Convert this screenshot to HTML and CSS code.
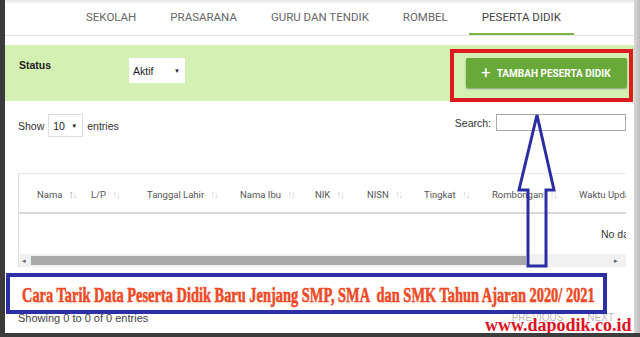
FILE: index.html
```html
<!DOCTYPE html>
<html lang="id">
<head>
    <meta charset="UTF-8">
    <meta name="viewport" content="width=device-width, initial-scale=1.0">
    <title>Peserta Didik</title>
    <link rel="stylesheet" href="styles.css">
</head>
<body>

    <div class="screen">
        <div class="edge-left"></div>

        <div class="page">
            <nav class="tabs">
                <a class="tab">SEKOLAH</a>
                <a class="tab">PRASARANA</a>
                <a class="tab">GURU DAN TENDIK</a>
                <a class="tab">ROMBEL</a>
                <a class="tab active">PESERTA DIDIK</a>
            </nav>

            <div class="filter">
                <span class="filter-label">Status</span>
                <div class="select status-select"><span>Aktif</span><span class="caret">&#9660;</span></div>
                <button class="btn-add"><span class="plus">+</span>TAMBAH PESERTA DIDIK</button>
            </div>

            <div class="controls">
                <div class="length">
                    Show
                    <div class="select len-select"><span>10</span><span class="caret">&#9660;</span></div>
                    entries
                </div>
                <div class="search">
                    <label for="search">Search:</label>
                    <input type="text" id="search">
                </div>
            </div>

            <div class="table-wrap">
                <div class="thead">
                    <div class="th">Nama<span class="sort asc"><b>&#8593;</b>&#8595;</span></div>
                    <div class="th">L/P<span class="sort">&#8593;&#8595;</span></div>
                    <div class="th">Tanggal Lahir<span class="sort">&#8593;&#8595;</span></div>
                    <div class="th">Nama Ibu<span class="sort">&#8593;&#8595;</span></div>
                    <div class="th">NIK<span class="sort">&#8593;&#8595;</span></div>
                    <div class="th">NISN<span class="sort">&#8593;&#8595;</span></div>
                    <div class="th">Tingkat<span class="sort">&#8593;&#8595;</span></div>
                    <div class="th">Rombongan<span class="sort">&#8593;&#8595;</span></div>
                    <div class="th">Waktu Update</div>
                </div>
                <div class="tbody">
                    <span class="empty">No data available in table</span>
                </div>
                <div class="hscroll">
                    <span class="arr">&#9666;</span>
                    <span class="thumb"></span>
                    <span class="arr right">&#9656;</span>
                </div>
            </div>

            <div class="info-row">
                <span class="info">Showing 0 to 0 of 0 entries</span>
                <div class="paginate">
                    <span>PREVIOUS</span>
                    <span>NEXT</span>
                </div>
            </div>
        </div>

        <div class="edge-right"></div>

        <!-- tanda-tanda di atas gambar -->
        <div class="mark-box"></div>

        <svg class="mark-arrow" width="42" height="157" viewBox="0 0 42 157">
            <polygon points="22,3 4,78 13,78 13,154 31,154 31,78 39,78" fill="none" stroke="#2b2ea3" stroke-width="3"/>
        </svg>

        <div class="caption">
            <span class="caption-text">Cara Tarik Data Peserta Didik Baru Jenjang SMP, SMA &nbsp;dan SMK Tahun Ajaran 2020/ 2021</span>
        </div>

        <div class="watermark">www.dapodik.co.id</div>
    </div>

</body>
</html>
```

FILE: styles.css
```css
* {
    margin: 0;
    padding: 0;
    box-sizing: border-box;
}

body {
    font-family: 'Liberation Sans', Arial, sans-serif;
    font-size: 10.5px;
    color: #333;
    background-color: #3a3a3a;
}

.screen {
    width: 640px;
    height: 337px;
    display: flex;
    position: relative;
    overflow: hidden;
    border-bottom: 4px solid #3c3c3c;
    background-color: #fff;
}

.edge-left {
    flex-shrink: 0;
    width: 5px;
    background-color: #3a3a3a;
}

.edge-right {
    flex-shrink: 0;
    width: 6px;
    background: linear-gradient(to right, #d8d8d8, #bdbdbd);
}

.page {
    flex: 1;
    min-width: 0;
    overflow: hidden;
    display: flex;
    flex-direction: column;
    background-color: #fff;
    background-image: linear-gradient(#e6e6e6, #fff 4px);
}

/* tab menu */
.tabs {
    display: flex;
    height: 36px;
    padding-left: 68px;
    gap: 8px;
    border-bottom: 1px solid #e2e2e2;
}

.tab {
    font-family: Roboto, sans-serif;
    font-size: 11.5px;
    color: #666;
    padding: 0 13px;
    line-height: 34px;
    height: 35px;
}

.tab.active {
    color: #444;
    box-shadow: inset 0 -2px 0 #7cb342;
}

/* filter hijau */
.filter {
    display: flex;
    align-items: flex-start;
    height: 56px;
    margin-top: 9px;
    padding: 13px 7px 0 14px;
    background-color: #d4f1b3;
}

.filter-label {
    width: 110px;
    line-height: 14px;
    font-weight: bold;
    color: #222;
}

.select {
    display: flex;
    align-items: center;
    justify-content: space-between;
    background-color: #fff;
    color: #222;
}

.caret {
    font-size: 6px;
    color: #222;
}

.status-select {
    width: 56px;
    height: 25px;
    padding: 0 5px 0 4px;
}

.btn-add {
    margin-left: auto;
    width: 161px;
    height: 30px;
    border: none;
    border-radius: 2px;
    background-color: #68a93a;
    box-shadow: 0 1px 2px rgba(0,0,0,0.35);
    color: #fff;
    font-family: Roboto, sans-serif;
    font-weight: bold;
    font-size: 10px;
    display: flex;
    align-items: center;
    padding-left: 15px;
}

.plus {
    font-size: 17px;
    font-weight: normal;
    margin-right: 6px;
    line-height: 1;
    margin-top: -2px;
}

/* show + search */
.controls {
    display: flex;
    align-items: flex-start;
    justify-content: space-between;
    margin-top: 13px;
    padding: 0 8px 0 13px;
}

.length {
    display: flex;
    align-items: center;
    gap: 4px;
    height: 23px;
}

.len-select {
    width: 35px;
    height: 23px;
    border: 1px solid #ddd;
    padding: 0 5px 0 4px;
}

.search {
    display: flex;
    align-items: center;
    gap: 5px;
}

.search input {
    width: 130px;
    height: 17px;
    border: 1px solid #a9a9a9;
}

/* tabel */
.table-wrap {
    margin: 36px 8px 0 13px;
    border-left: 1px solid #e0e0e0;
    border-top: 1px solid #e6e6e6;
    overflow: hidden;
}

.thead {
    display: grid;
    grid-template-columns: 54px 56px 93px 75px 52px 57px 68px 87px 120px;
    height: 40px;
    padding: 3px 0 0 18px;
    align-items: center;
    border-bottom: 2px solid #d9d9d9;
    white-space: nowrap;
}

.th {
    font-family: Roboto, sans-serif;
    font-size: 9.5px;
    color: #555;
}

.sort {
    margin-left: 6px;
    font-size: 11px;
    color: #d6d6d6;
    letter-spacing: -2px;
}

.sort b {
    font-weight: normal;
    color: #a8a8a8;
}

.tbody {
    height: 40px;
    display: flex;
    align-items: center;
    padding-left: 582px;
    white-space: nowrap;
}

.empty {
    font-size: 10.5px;
    color: #333;
}

.hscroll {
    display: flex;
    align-items: center;
    height: 13px;
    background-color: #f1f1f1;
    padding: 0 3px;
}

.arr {
    font-size: 7px;
    color: #606060;
    width: 9px;
}

.arr.right {
    margin-left: auto;
}

.thumb {
    width: 495px;
    height: 9px;
    background-color: #a8a8a8;
}

/* info bawah */
.info-row {
    display: flex;
    justify-content: space-between;
    margin-top: 44px;
    padding: 0 20px 0 13px;
    line-height: 14px;
}

.info {
    font-size: 11px;
    color: #444;
}

.paginate {
    display: flex;
    gap: 24px;
    font-size: 10px;
    color: #bbb;
}

/* tanda merah, panah biru, judul */
.mark-box {
    position: absolute;
    left: 450px;
    top: 49px;
    width: 183px;
    height: 53px;
    border: 4px solid #dc1a1f;
}

.mark-arrow {
    position: absolute;
    left: 515px;
    top: 112px;
}

.caption {
    position: absolute;
    left: 6px;
    top: 273px;
    width: 601px;
    height: 41px;
    border: 4px solid #2c2fa6;
    background-color: #fff;
    overflow: hidden;
}

.caption-text {
    display: block;
    width: 880px;
    margin-left: 12px;
    padding-top: 3px;
    transform: scaleX(0.655);
    transform-origin: left top;
    font-family: 'Liberation Serif', 'Times New Roman', serif;
    font-weight: bold;
    font-size: 22px;
    line-height: 30px;
    color: #ef4a25;
    -webkit-text-stroke: 0.6px #ef4a25;
    white-space: nowrap;
}

.watermark {
    position: absolute;
    left: 485px;
    top: 315px;
    font-family: 'Liberation Serif', 'Times New Roman', serif;
    font-weight: bold;
    font-size: 18px;
    line-height: 20px;
    color: #e3111d;
    text-shadow: -1px -1px 0 #fff, 1px -1px 0 #fff, -1px 1px 0 #fff, 1px 1px 0 #fff;
}
```
